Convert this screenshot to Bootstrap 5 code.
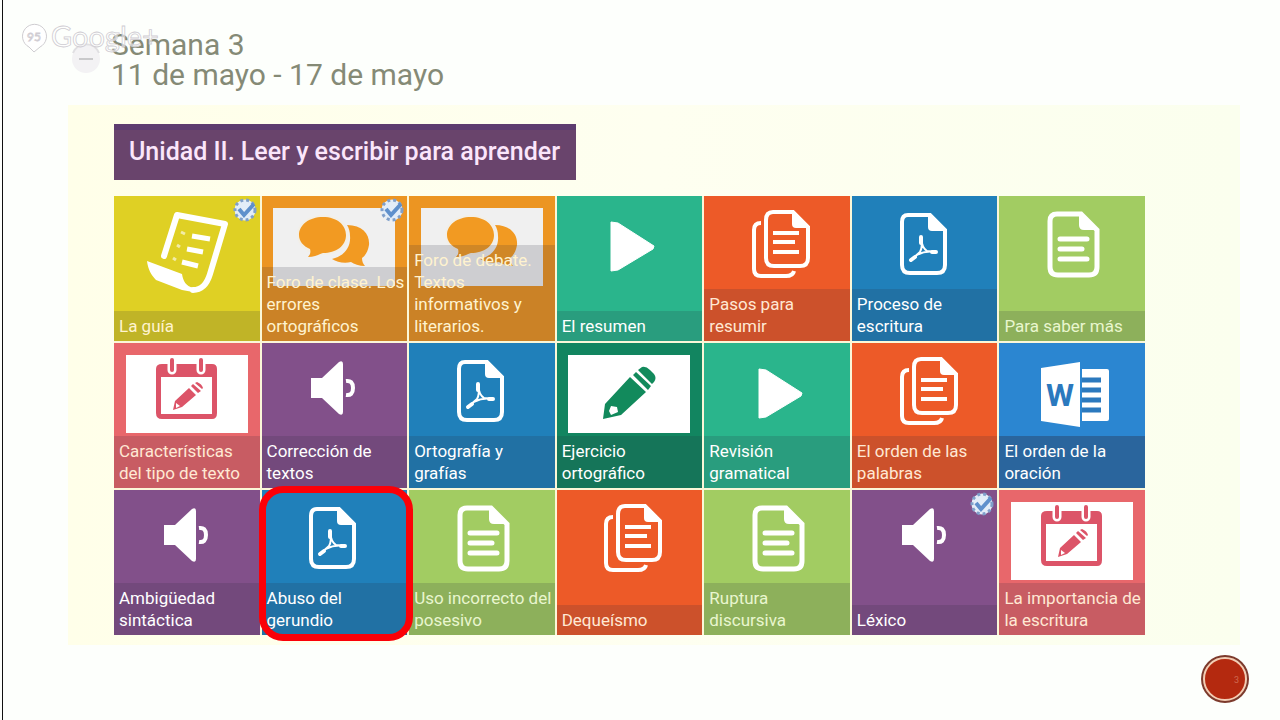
<!DOCTYPE html>
<html lang="es">
<head>
    <meta charset="UTF-8">
    <meta name="viewport" content="width=device-width, initial-scale=1.0">
    <title>Unidad II. Leer y escribir para aprender</title>
    <link rel="stylesheet" href="https://cdn.jsdelivr.net/npm/bootstrap@5.3.0/dist/css/bootstrap.min.css">
    <style>
        body {
            font-family: Roboto, "Liberation Sans", sans-serif;
            background: #fdfffc;
        }
        .slide {
            margin-left: 2px;
            border-left: 1px solid #111;
        }
        .week {
            padding: 30px 40px 15px 108px;
        }
        .week h1 {
            font-size: 30px;
            line-height: 30px;
            color: #858a76;
        }
        .panel {
            margin: 0 40px 0 65px;
            padding: 19px 95px 10px 46px;
            background: linear-gradient(90deg, #ffffe9 0, #fefff0 50%, #fbffee 100%);
        }
        .unit {
            padding: 1px 16px 7px 15px;
            border-top: 6px solid #5d3c70;
            background: #69446c;
            color: #fbe6fb;
            font-size: 25px;
            line-height: 42px;
        }
        .tiles {
            display: grid;
            grid-template-columns: repeat(7, minmax(0, 1fr));
            gap: 2px;
            background: #fbf7d8;
        }
        .tile {
            min-height: 145px;
            padding-top: 12px;
            color: #fff;
        }
        .pic {
            width: 122px;
            height: 78px;
            overflow: visible;
        }
        .framed { background: #fff; }
        .soft { background: #f0f0f0; }
        .caption {
            position: absolute;
            left: 0;
            right: 0;
            bottom: 0;
            padding: 4px 0 4px 5px;
            background: rgba(40, 40, 60, .17);
            font-size: 17px;
            line-height: 22px;
        }
        .yellow { background: #dfd024; }
        .orange { background: #ec9522; }
        .teal { background: #2ab58c; }
        .red { background: #ed5a28; }
        .blue { background: #2080ba; }
        .lime { background: #a2cc62; }
        .pink { background: #e8676b; }
        .purple { background: #82508a; }
        .green { background: #128560; }
        .word { background: #2b86d1; }
        .yellow .caption, .orange .caption { color: #fff3cf; }
        .red .caption, .pink .caption { color: #ffe8d4; }
        .lime .caption { color: #e9f6cf; }
        .word .caption { background: rgba(40, 40, 60, .35); }
        .orange .pic { color: #f29a22; }
        .pink .pic { color: #dc5468; }
        .green .pic { color: #128a5c; }
        .done {
            position: absolute;
            top: 2px;
            right: 3px;
            width: 24px;
            height: 24px;
        }
        .marker {
            position: absolute;
            inset: -4px -6px -6px -3px;
            border: 7px solid #fb0007;
            border-radius: 24px;
            z-index: 2;
        }
        .watermark {
            position: absolute;
            left: 17px;
            top: 18px;
            width: 170px;
            height: 64px;
            overflow: visible;
        }
        .watermark text {
            font-family: Lato, sans-serif;
            fill: #fff;
            fill-opacity: .6;
            stroke: #cfccd2;
            stroke-width: .8;
        }
        .dot {
            width: 48px;
            height: 48px;
            margin: 0 31px 17px 0;
        }
    </style>
</head>
<body>

    <!-- Iconos -->
    <svg class="d-none">
        <symbol id="guide" viewBox="0 0 122 78" overflow="visible">
            <path d="M38 48 51 7 99 16 84 66C81 76 76 82 67 82" fill="none" stroke="currentColor" stroke-width="6" stroke-linejoin="round" stroke-linecap="round"/>
            <path d="M21 53 56 66C57 73 60 78 67 80V84L56 82 30 72C25 67 22 61 21 53Z" fill="currentColor"/>
            <path d="M66 28 84 31M61 41 77 44M56 54 72 58" stroke="currentColor" stroke-width="5"/>
            <path d="M55 24 59 26M51 37 54 39M47 50 50 52" stroke="currentColor" stroke-width="3" opacity=".6"/>
        </symbol>
        <symbol id="chat" viewBox="0 0 122 78" overflow="visible">
            <path d="M74 17C90 17 97 27 96 37C95 43 93 47 89 50C89 53 90 56 92 58C86 58 81 56 78 54C71 56 64 54 59 51C72 48 78 38 77 28C77 24 76 20 74 17Z" fill="currentColor"/>
            <ellipse cx="50" cy="27" rx="26" ry="20" fill="#f3efe6"/>
            <path d="M50 9C64 9 73 17 73 27C73 38 63 45 50 45C47 46 42 49 35 49C37 47 38 44 37 41C30 38 26 33 26 27C26 17 36 9 50 9Z" fill="currentColor"/>
        </symbol>
        <symbol id="play" viewBox="0 0 122 78" overflow="visible">
            <path d="M43 14 50 15 86 38 85 41 50 62 43 63Z" fill="currentColor" stroke="currentColor" stroke-linejoin="round"/>
        </symbol>
        <symbol id="docs" viewBox="0 0 122 78" overflow="visible">
            <path d="M57 4H77L92 19V50Q92 58 84 58H58Q50 58 50 50V12Q50 4 57 4ZM45 15Q38 15 38 22V61Q38 68 45 68H70Q77 68 78 63" fill="none" stroke="currentColor" stroke-width="4"/>
            <path d="M76 3 94 20H80Q76 20 76 16Z" fill="currentColor"/>
            <path d="M57 25H83M57 34H79M57 44H83" stroke="currentColor" stroke-width="4"/>
        </symbol>
        <symbol id="pdf" viewBox="0 0 122 78" overflow="visible">
            <path d="M44 7H66L81 22V57Q81 65 73 65H46Q38 65 38 57V14Q38 7 44 7Z" fill="none" stroke="currentColor" stroke-width="4"/>
            <path d="M64 5 83 23H68Q64 23 64 19Z" fill="currentColor"/>
            <path d="M57 30Q59 39 56 44L47 52M57 30Q58 40 63 43L72 44M53 47Q62 42 72 44" fill="none" stroke="currentColor" stroke-width="2" stroke-linecap="round"/>
            <path d="M57 29V35M47 52 51 49M68 44H72" stroke="currentColor" stroke-width="4" stroke-linecap="round"/>
        </symbol>
        <symbol id="doc" viewBox="0 0 122 78" overflow="visible">
            <path d="M46 6H70L86 22V59Q86 67 78 67H47Q39 67 39 59V13Q39 6 46 6Z" fill="none" stroke="currentColor" stroke-width="5"/>
            <path d="M68 4 88 22H73Q68 22 68 17Z" fill="currentColor"/>
            <path d="M49 31H76M49 41H71M49 51H76" stroke="currentColor" stroke-width="5" stroke-linecap="round"/>
        </symbol>
        <symbol id="calendar" viewBox="0 0 122 78" overflow="visible">
            <path d="M36 9H86Q91 9 91 14V58Q91 64 86 64H36Q30 64 30 58V14Q30 9 36 9ZM35 22V59H86V22Z" fill="currentColor" fill-rule="evenodd"/>
            <path d="M46 6V15M75 6V15" stroke="#fff" stroke-width="9" stroke-linecap="round"/>
            <path d="M46 5V15M75 5V15" stroke="currentColor" stroke-width="4" stroke-linecap="round"/>
            <path d="M47 55 49 46 63 33 70 40 56 52ZM65 31 67 29 75 36 72 38ZM69 28 71 27Q76 29 77 33L76 34Z" fill="currentColor"/>
            <path d="M50 48 54 51 50 53Z" fill="#fff"/>
        </symbol>
        <symbol id="audio" viewBox="0 0 122 78" overflow="visible">
            <path d="M38 23H49L66 7Q70 5 70 9V57Q70 61 66 59L49 43H38Z" fill="currentColor"/>
            <path d="M73 26Q80 25 80 33Q80 41 73 40" fill="none" stroke="currentColor" stroke-width="4"/>
        </symbol>
        <symbol id="pencil" viewBox="0 0 122 78" overflow="visible">
            <path d="M35 64 37 49 62 22 78 37 53 60ZM65 20 68 17 83 31 80 35ZM70 15 74 12Q78 11 82 15L86 19Q89 23 86 27L84 29Z" fill="currentColor"/>
            <path d="M43 51 49 52 50 57 43 60 41 56Z" fill="#fff"/>
        </symbol>
        <symbol id="docx" viewBox="0 0 122 78" overflow="visible">
            <path d="M30 13 69 7V72L30 66ZM71 14H96Q98 14 98 16V64Q98 66 96 66H71Z" fill="currentColor"/>
            <path d="M71 25H90M71 35H90M71 45H90M71 55H90" stroke="#2b79be" stroke-width="5"/>
            <text x="49" y="51" text-anchor="middle" font-size="32" font-weight="700" fill="#2b79be">W</text>
        </symbol>
        <symbol id="check" viewBox="0 0 24 24">
            <circle cx="12" cy="12" r="9" fill="#e3edf8" stroke="#e3edf8" stroke-width="3"/>
            <circle cx="12" cy="12" r="10" fill="none" stroke="#7f9fca" stroke-width="3" stroke-dasharray="3 3"/>
            <path d="M6 11 11 17 21 6" fill="none" stroke="#5f90cc" stroke-width="4"/>
        </symbol>
    </svg>

    <div class="slide min-vh-100 d-flex flex-column position-relative">

        <header class="week">
            <h1 class="fw-normal m-0">Semana 3<br>11 de mayo - 17 de mayo</h1>
        </header>

        <!-- Marca de agua -->
        <svg class="watermark" viewBox="0 0 170 64">
            <circle cx="66" cy="41" r="14" fill="#f3f2f4"/>
            <path d="M53 35A14 14 0 0 1 79 35" fill="none" stroke="#e0dfe2" stroke-width="2"/>
            <path d="M59 41H73" stroke="#c9c9cb" stroke-width="2"/>
            <path d="M14 34 9 29A12 12 0 1 1 20 29Z" fill="#fff" stroke="#cfcdd1"/>
            <text x="7" y="23" font-size="12">95</text>
            <text x="31" y="29" font-size="29">Google+</text>
        </svg>

        <main class="panel">
            <h2 class="unit d-inline-block fw-medium mb-3 align-top">Unidad II. Leer y escribir para aprender</h2>

            <div class="tiles">
                <a href="#" class="tile yellow position-relative text-center text-decoration-none">
                    <svg class="pic"><use href="#guide"/></svg>
                    <svg class="done"><use href="#check"/></svg>
                    <span class="caption text-start">La guía</span>
                </a>
                <a href="#" class="tile orange position-relative text-center text-decoration-none">
                    <svg class="pic soft"><use href="#chat"/></svg>
                    <svg class="done"><use href="#check"/></svg>
                    <span class="caption text-start">Foro de clase. Los errores<br>ortográficos</span>
                </a>
                <a href="#" class="tile orange position-relative text-center text-decoration-none">
                    <svg class="pic soft"><use href="#chat"/></svg>
                    <span class="caption text-start">Foro de debate. Textos<br>informativos y literarios.</span>
                </a>
                <a href="#" class="tile teal position-relative text-center text-decoration-none">
                    <svg class="pic"><use href="#play"/></svg>
                    <span class="caption text-start">El resumen</span>
                </a>
                <a href="#" class="tile red position-relative text-center text-decoration-none">
                    <svg class="pic"><use href="#docs"/></svg>
                    <span class="caption text-start">Pasos para<br>resumir</span>
                </a>
                <a href="#" class="tile blue position-relative text-center text-decoration-none">
                    <svg class="pic"><use href="#pdf"/></svg>
                    <span class="caption text-start">Proceso de<br>escritura</span>
                </a>
                <a href="#" class="tile lime position-relative text-center text-decoration-none">
                    <svg class="pic"><use href="#doc"/></svg>
                    <span class="caption text-start">Para saber más</span>
                </a>

                <a href="#" class="tile pink position-relative text-center text-decoration-none">
                    <svg class="pic framed"><use href="#calendar"/></svg>
                    <span class="caption text-start">Características<br>del tipo de texto</span>
                </a>
                <a href="#" class="tile purple position-relative text-center text-decoration-none">
                    <svg class="pic"><use href="#audio"/></svg>
                    <span class="caption text-start">Corrección de textos</span>
                </a>
                <a href="#" class="tile blue position-relative text-center text-decoration-none">
                    <svg class="pic"><use href="#pdf"/></svg>
                    <span class="caption text-start">Ortografía y<br>grafías</span>
                </a>
                <a href="#" class="tile green position-relative text-center text-decoration-none">
                    <svg class="pic framed"><use href="#pencil"/></svg>
                    <span class="caption text-start">Ejercicio ortográfico</span>
                </a>
                <a href="#" class="tile teal position-relative text-center text-decoration-none">
                    <svg class="pic"><use href="#play"/></svg>
                    <span class="caption text-start">Revisión gramatical</span>
                </a>
                <a href="#" class="tile red position-relative text-center text-decoration-none">
                    <svg class="pic"><use href="#docs"/></svg>
                    <span class="caption text-start">El orden de las palabras</span>
                </a>
                <a href="#" class="tile word position-relative text-center text-decoration-none">
                    <svg class="pic"><use href="#docx"/></svg>
                    <span class="caption text-start">El orden de la<br>oración</span>
                </a>

                <a href="#" class="tile purple position-relative text-center text-decoration-none">
                    <svg class="pic"><use href="#audio"/></svg>
                    <span class="caption text-start">Ambigüedad sintáctica</span>
                </a>
                <a href="#" class="tile blue position-relative text-center text-decoration-none">
                    <svg class="pic"><use href="#pdf"/></svg>
                    <span class="caption text-start">Abuso del<br>gerundio</span>
                    <span class="marker"></span>
                </a>
                <a href="#" class="tile lime position-relative text-center text-decoration-none">
                    <svg class="pic"><use href="#doc"/></svg>
                    <span class="caption text-start">Uso incorrecto del posesivo</span>
                </a>
                <a href="#" class="tile red position-relative text-center text-decoration-none">
                    <svg class="pic"><use href="#docs"/></svg>
                    <span class="caption text-start">Dequeísmo</span>
                </a>
                <a href="#" class="tile lime position-relative text-center text-decoration-none">
                    <svg class="pic"><use href="#doc"/></svg>
                    <span class="caption text-start">Ruptura<br>discursiva</span>
                </a>
                <a href="#" class="tile purple position-relative text-center text-decoration-none">
                    <svg class="pic"><use href="#audio"/></svg>
                    <svg class="done"><use href="#check"/></svg>
                    <span class="caption text-start">Léxico</span>
                </a>
                <a href="#" class="tile pink position-relative text-center text-decoration-none">
                    <svg class="pic framed"><use href="#calendar"/></svg>
                    <span class="caption text-start">La importancia de la escritura</span>
                </a>
            </div>
        </main>

        <footer class="mt-auto d-flex justify-content-end">
            <svg class="dot" viewBox="0 0 48 48">
                <circle cx="24" cy="24" r="24" fill="#7c3a2c"/>
                <circle cx="24" cy="24" r="21" fill="#b4290f" stroke="#f3cdb4" stroke-width="2"/>
                <text x="33" y="28" font-size="9" fill="#cf6a50">3</text>
            </svg>
        </footer>
    </div>

    <script src="https://cdn.jsdelivr.net/npm/bootstrap@5.3.0/dist/js/bootstrap.bundle.min.js"></script>
</body>
</html>
